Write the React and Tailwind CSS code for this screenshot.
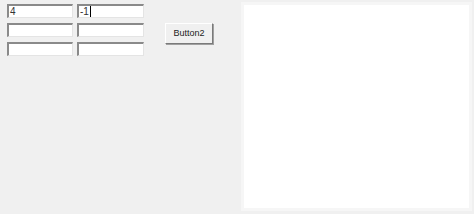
export default function App() {
  const boxes = ['4', '-1', '', '', '', ''];

  return (
    <div className="w-[474px] h-[214px] bg-[#f0f0f0] flex items-start overflow-hidden" style={{ fontFamily: '"Liberation Sans", Arial, sans-serif' }}>
      {/* text boxes */}
      <div className="ml-[7px] mt-[4px] grid grid-cols-[66px_67px] gap-x-[4px] gap-y-[5px]">
        {boxes.map((v, i) => (
          <div
            key={i}
            className="h-[14px] bg-white border-t-2 border-l-2 border-t-[#8a8a8a] border-l-[#8a8a8a] border-r border-b border-r-[#e4e4e4] border-b-[#e4e4e4] flex items-center pl-[1px] text-[10px] leading-none text-[#333]"
          >
            {v}
            {i === 1 && <span className="ml-[1px] w-px h-[11px] bg-black" />}
          </div>
        ))}
      </div>

      {/* button */}
      <button className="ml-[21px] mt-[23px] w-[48px] h-[21px] bg-[#f0f0f0] border border-t-white border-l-white border-r-[#7a7a7a] border-b-[#7a7a7a] shadow-[1px_1px_0_#a0a0a0] text-[9px] text-[#222] flex items-center justify-center">
        Button2
      </button>

      {/* white panel */}
      <div className="ml-[31px] mt-[5px] w-[225px] h-[203px] bg-white shadow-[0_0_0_3px_#f6f6f6]" />
    </div>
  );
}
